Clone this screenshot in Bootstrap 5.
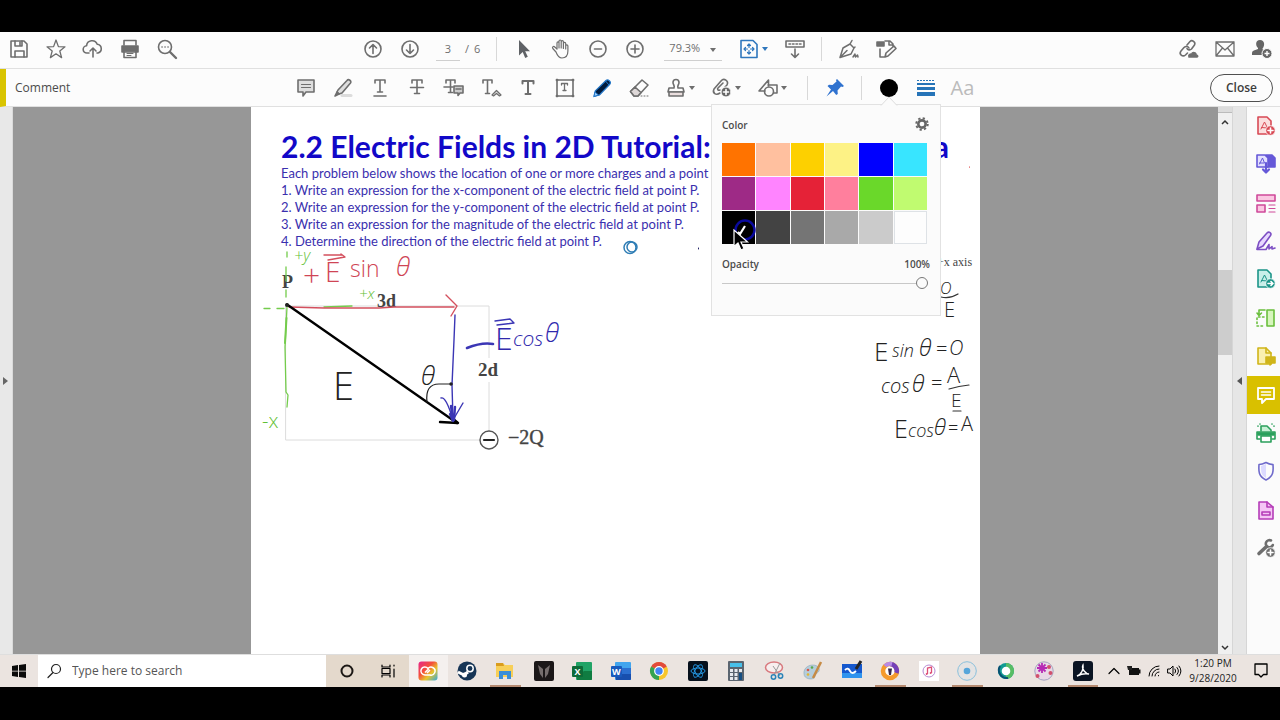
<!DOCTYPE html>
<html lang="en">
<head>
<meta charset="utf-8">
<meta name="viewport" content="width=device-width, initial-scale=1">
<title>Electric Fields Tutorial</title>
<link href="https://cdn.jsdelivr.net/npm/bootstrap@5.3.0/dist/css/bootstrap.min.css" rel="stylesheet">
<style>
  body { font-family: "Open Sans", "Noto Sans", sans-serif; font-size: 12px; line-height: 16px; color: #4b4b4b; background: #000; padding: 32px 0 33px; }
  svg { display: block; overflow: visible; }
  .ink { fill: none; stroke: currentColor; stroke-width: 1.6; stroke-linejoin: round; stroke-linecap: round; }
  .tool { width: 37px; height: 32px; padding: 0; border: 0; border-radius: 0; color: #6e6e6e; display: flex; align-items: center; justify-content: center; flex: none; }
  .tool svg { width: 20px; height: 20px; }
  .tool.wide { width: 46px; gap: 3px; }
  .caret { width: 0; border: 3px solid transparent; border-top: 4px solid currentColor; border-bottom: 0; }
  .blue { color: #2f77bd; }
  .bar { background: #fcfcfc; border-bottom: 1px solid #e0e0e0; }
  .bar-main { height: 37px; padding-bottom: 3px; }
  .bar-comment { height: 38px; border-left: 6px solid #d9c400; padding-right: 7px; }
  .lead-main { width: 354px; }
  .lead-comment { width: 281px; padding-left: 9px; font-size: 12px; font-weight: 500; }
  .rule { width: 1px; height: 24px; background: #d8d8d8; flex: none; margin: 0 8px; }
  .rule.near { margin-left: 0; }
  .rule.far { margin: 0 8px 0 12px; }
  .field { border: 0; border-bottom: 1px solid #cfcfcf; background: transparent; color: #6e6e6e; font-size: 11px; height: 24px; padding: 0; text-align: center; }
  .page-no { width: 24px; margin: 0 5px 0 8px; }
  .page-count { display: flex; align-items: center; gap: 5px; border: 0; padding-right: 16px; }
  .zoom-level { width: 58px; appearance: none; text-align: left; padding-left: 5px; }
  .zoom-box { margin: 0 8px 0 11px; position: relative; color: #6e6e6e; }
  .zoom-box .caret { position: absolute; right: 6px; top: 11px; }
  .close-btn { width: 63px; height: 28px; border: 1px solid #505050; border-radius: 14px; font-size: 12px; font-weight: 600; padding: 0; color: #3c3c3c; }
  .strip-l { width: 13px; background: #e8e8e8; border-right: 1px solid #dadada; }
  .desk { background: #979797; }
  .sheet { width: 729px; background: #fff; padding: 20px 31px 0 30px; color: #3a2fae; font-family: Lato, sans-serif; }
  .sheet h1 { font-size: 30px; line-height: 38px; font-weight: 700; color: #1208c8; margin: 0; white-space: nowrap; }
  .sheet p, .sheet li { font-size: 13px; line-height: 17px; margin: 0; white-space: nowrap; }
  .overlay { position: absolute; top: 0; left: 0; }
  .vscroll { width: 14px; background: #f0f0f0; }
  .vscroll .split { height: 6px; background: #dcdcdc; border-bottom: 1px solid #bbb; }
  .vscroll .thumb { height: 85px; background: #cdcdcd; }
  .strip-r { width: 15px; background: #e6e6e6; border-left: 1px solid #d6d6d6; border-right: 1px solid #d6d6d6; }
  .side { width: 33px; background: #fbfbfb; }
  .side-list { height: 460px; }
  .side .tool { width: 33px; height: 38px; padding-left: 5px; }
  .side .on { background: #d9c000; color: #fff; }
  .popup { position: absolute; left: -159px; top: 32px; width: 230px; height: 212px; background: #fbfbfb; border: 1px solid #e2e2e2; padding: 12px 10px 0; z-index: 5; color: #4b4b4b; font-size: 10px; font-weight: 600; }
  .notch { position: absolute; left: 169px; top: -9px; }
  .pal { display: grid; grid-template-columns: repeat(6, 1fr); gap: 1px; width: 205px; margin-top: 10px; }
  .pal button { height: 33px; border: 0; padding: 0; }
  .opacity { appearance: none; display: block; width: 206px; height: 12px; margin: 5px 0 0; background: linear-gradient(#c8c8c8, #c8c8c8) 0 6px / 194px 1px no-repeat; }
  .opacity::-webkit-slider-thumb { appearance: none; width: 12px; height: 12px; border: 1px solid #777; border-radius: 50%; background: #fbfbfb; }
  .opacity::-moz-range-thumb { width: 10px; height: 10px; border: 1px solid #777; border-radius: 50%; background: #fbfbfb; }
  .pointer { position: absolute; left: 19px; top: 111px; }
  .taskbar { height: 33px; background: #ebe4e0; border-top: 1px solid #dedede; color: #222; }
  .search { width: 288px; background: #fff; }
  .search input { border: 0; outline: 0; font-size: 12px; width: 230px; background: transparent; color: #444; }
  .search input::placeholder { color: #555; opacity: 1; }
  .cortana { width: 83px; background: #e4d9cc; }
  .apps { flex: 0 1 693px; }
  .apps button, .task { border: 0; background: none; padding: 0; display: flex; align-items: center; justify-content: center; height: 32px; }
  .apps button { flex: 1 1 0; min-width: 0; position: relative; }
  .apps svg { width: 20px; height: 20px; }
  .apps .live::after { content: ""; position: absolute; bottom: 0; left: 4px; right: 4px; height: 2px; background: #b58a70; }
  .apps .sel { background: #f4f0ee; }
  .task { flex: none; width: 20px; }
  .task.start { width: 38px; }
  .clock { width: 58px; font-size: 10px; line-height: 15px; text-align: center; }
</style>
</head>
<body class="vh-100 d-flex flex-column overflow-hidden m-0">

<header class="bar bar-main d-flex align-items-center flex-shrink-0">
  <div class="lead-main d-flex flex-shrink-0">
    <button class="tool btn" aria-label="Save"><svg class="ink" viewBox="0 0 20 20"><path d="M2 2h13l3 3v13H2z"/><path d="M6 2v5h7V2M11 3v3M6 18v-6h9v6"/></svg></button>
    <button class="tool btn" aria-label="Star"><svg class="ink" viewBox="0 0 20 20"><path d="M10 1l2.400 6.600 6.600.2-5.200 4.200 1.800 6.600L10 14.800l-5.600 3.800 1.800-6.600L1 7.800l6.600-.2z" stroke-width="1.300"/></svg></button>
    <button class="tool btn" aria-label="Upload"><svg class="ink" viewBox="0 0 20 20"><path d="M6 14H4a3.600 3.600 0 0 1-.4-7.200 5.500 5.500 0 0 1 10.600-1.600A4.500 4.500 0 0 1 15 14h-1M10 18V9M7 12l3-3 3 3"/></svg></button>
    <button class="tool btn" aria-label="Print"><svg class="ink" viewBox="0 0 20 20"><path d="M4 6V1.500h12V6M4 13v5.500h12V13z"/><path d="M2 7h16v6h-2v-1H4v1H2z" fill="currentColor"/><path d="M7 14.500h6M7 16.500h4" stroke-width="1"/></svg></button>
    <button class="tool btn" aria-label="Find"><svg class="ink" viewBox="0 0 20 20"><circle cx="8" cy="8" r="6.500"/><path d="M13 13l6 6" stroke-width="2.400"/><path d="M5 8h.1M8 8h.1M11 8h.1"/></svg></button>
  </div>
  <button class="tool btn" aria-label="Previous page"><svg class="ink" viewBox="0 0 20 20"><circle cx="10" cy="10" r="8"/><path d="M10 14.500v-9M6.500 9L10 5.500 13.500 9"/></svg></button>
  <button class="tool btn" aria-label="Next page"><svg class="ink" viewBox="0 0 20 20"><circle cx="10" cy="10" r="8"/><path d="M10 5.500v9M6.500 11l3.500 3.500 3.500-3.500"/></svg></button>
  <input class="field page-no" type="text" value="3" aria-label="Page number">
  <span class="field page-count"><span>/</span><span>6</span></span>
  <span class="rule near"></span>
  <button class="tool btn" aria-label="Select"><svg viewBox="0 0 20 20"><path d="M5 1v15.500l3.700-3.500 2.500 6 2.600-1.200-2.600-5.600H16z" fill="#5f6266"/></svg></button>
  <button class="tool btn" aria-label="Hand"><svg class="ink" viewBox="0 0 20 20"><path d="M5 13L1.800 9.500c-1-1.500.8-2.800 2-1.500L6 10.200V4c0-1.500 2-1.500 2 0V9 2.200c0-1.600 2.200-1.600 2.200 0V9 2.800c0-1.500 2.200-1.500 2.200 0V9.500 4.500c0-1.500 2.300-1.500 2.300 0V10 7c0-1.500 2.200-1.500 2.200 0v5c0 4-2 7-6 7-3.500 0-4.600-2.500-5.900-6z" stroke-width="1.200"/></svg></button>
  <button class="tool btn" aria-label="Zoom out"><svg class="ink" viewBox="0 0 20 20"><circle cx="10" cy="10" r="8"/><path d="M6.500 10h7"/></svg></button>
  <button class="tool btn" aria-label="Zoom in"><svg class="ink" viewBox="0 0 20 20"><circle cx="10" cy="10" r="8"/><path d="M6 10h8M10 6v8"/></svg></button>
  <div class="zoom-box"><select class="field zoom-level" aria-label="Zoom level"><option>79.3%</option></select><span class="caret"></span></div>
  <button class="tool wide btn blue" aria-label="Fit page"><svg class="ink" viewBox="0 0 20 20"><path d="M2 1.500h12l4 4v13H2z"/><path d="M10 5v3.500M10 11.500V15M5 10h3.500M11.500 10H15M8.500 6.500L10 5l1.500 1.500M8.500 13.500L10 15l1.500-1.500M6.500 8.500L5 10l1.500 1.500M13.500 8.500L15 10l-1.500 1.500" stroke-width="1.200"/></svg><span class="caret"></span></button>
  <button class="tool btn" aria-label="Scroll mode"><svg class="ink" viewBox="0 0 20 20"><path d="M1 2h18v6H1zM10 10v8M6.500 15l3.500 3.500 3.500-3.500"/><path d="M4 5h13" stroke-dasharray="1.500 2"/></svg></button>
  <span class="rule"></span>
  <button class="tool btn" aria-label="Sign"><svg class="ink" viewBox="0 0 20 20"><path d="M1 18.500L4 9l7-4 4 4-3 6-11 3.500L8 11.500M11 5l2-3.500M15 9l1-1M14 18l2-3 .5 3 2-2 .5 2" stroke-width="1.500"/></svg></button>
  <button class="tool btn" aria-label="Edit"><svg class="ink" viewBox="0 0 20 20"><path d="M4 10v8h5M9 2h5l3 3v3M13 2v4h4M9 18l1-4 8-7 2 2.500-8 7.500z"/><path d="M1 3h7v4H1z" fill="currentColor"/></svg></button>
  <div class="ms-auto d-flex">
    <button class="tool btn" aria-label="Share link"><svg class="ink" viewBox="0 0 20 20"><path d="M9 6l3-3.500c2-2 6 .5 4.500 3.500l-3 4c-1.500 1.500-4 1-4.500-.5M11 9c-1-2-3.500-2-5-.5l-3 3.500c-2.500 3 1.500 6.500 4.500 4l2-2"/><path d="M11 18c-1-3 2-3 2.500-2.500 1-3 5-2 4.500.500 2 0 2 2 1 2z" fill="currentColor"/></svg></button>
    <button class="tool btn" aria-label="Mail"><svg class="ink" viewBox="0 0 20 20"><path d="M1 3h18v14H1zM1 3l9 8 9-8M1 17l6.500-8M19 17l-6.500-8" stroke-width="1.300"/></svg></button>
    <button class="tool btn" aria-label="Add people"><svg viewBox="0 0 20 20"><path d="M8 1c5 0 5 6 2.500 8.500 0 2 3 2 4 3L11 16H0c0-4 0-4 6-6V9C3.500 7 3 1 8 1z" fill="#666"/><circle cx="15" cy="14.500" r="5" fill="#666" stroke="#fcfcfc"/><path d="M12.500 14.500h5M15 12v5" stroke="#fff" stroke-width="1.400"/></svg></button>
  </div>
</header>

<div class="bar bar-comment d-flex align-items-center flex-shrink-0">
  <div class="lead-comment flex-shrink-0">Comment</div>
  <button class="tool btn" aria-label="Note"><svg class="ink" viewBox="0 0 20 20"><path d="M2 2h16v12h-8l-3 4v-4H2z" fill="#dedede"/><path d="M5.500 6.500h9M5.500 9.500h9" stroke-width="1.200"/></svg></button>
  <button class="tool btn" aria-label="Highlight"><svg class="ink" viewBox="0 0 20 20"><path d="M9 17.500h9" stroke="#dcdcdc" stroke-width="3"/><path d="M5 12L14 2.500c1.500-2 5 .5 3.500 2.500L9 15l-3 1-2-2z" fill="#dedede"/><path d="M4 14l-2 4 4-2z" fill="currentColor"/></svg></button>
  <button class="tool btn" aria-label="Underline text"><svg class="ink" viewBox="0 0 20 20"><path d="M5 5V2h10v3M10 2v12M7.500 14h5M4 18h12"/></svg></button>
  <button class="tool btn" aria-label="Strike text"><svg class="ink" viewBox="0 0 20 20"><path d="M5 5V2h10v3M10 2v13M7.500 15.500h5M3.500 9.500h13"/></svg></button>
  <button class="tool btn" aria-label="Replace text"><svg class="ink" viewBox="0 0 20 20"><path d="M2 5V2h9v3M6.500 2v12M4.500 14.500h4M0 9h9"/><path d="M10 8h9v7h-3l-2 2.500V15h-4z" fill="#ccc"/><path d="M12 11h5"/></svg></button>
  <button class="tool btn" aria-label="Insert text"><svg class="ink" viewBox="0 0 20 20"><path d="M2 5V2h9v3M6.500 2v13M4.500 15.500h4"/><path d="M11 17l4.500-4.500L20 17l-1.500 1-3-2.500-3 2.500z" fill="#ddd" stroke-width="1.200"/></svg></button>
  <button class="tool btn" aria-label="Text comment"><svg class="ink" viewBox="0 0 20 20"><path d="M4.500 5.500V3h11v2.500M10 3v13M7.500 16h5" stroke-width="2"/></svg></button>
  <button class="tool btn" aria-label="Text box"><svg class="ink" viewBox="0 0 20 20"><path d="M2 2h16v16H2z"/><path d="M6.500 7V5.500h6V7M9.500 5.500v7M8 12.500h3" stroke-width="1.300"/><path d="M1.500 1.500h1v1h-1zM17.500 1.500h1v1h-1zM1.500 17.500h1v1h-1zM17.500 17.500h1v1h-1z"/></svg></button>
  <button class="tool btn" aria-label="Draw"><svg viewBox="0 0 20 20"><path d="M2 18.500L3.200 13 14 2.500c2-2 5.500 1.500 4 3.500L7.500 17z" fill="#001a3c" stroke="#2377c8" stroke-width="1.200"/><path d="M2 18.500L3 14l3.500 3z" fill="#9ccfff" stroke="#2377c8"/><path d="M13.500 3L17 7" stroke="#2377c8"/></svg></button>
  <button class="tool btn" aria-label="Eraser"><svg class="ink" viewBox="0 0 20 20"><path d="M1.500 13.500L13 2l6 5L9 18H5z"/><path d="M6 9l6 5.500-3 3.500H5l-3.500-4.500z" fill="#ded8d8"/><path d="M12 18h7" stroke-dasharray="1 2" stroke-width="1"/></svg></button>
  <button class="tool wide btn" aria-label="Stamp"><svg class="ink" viewBox="0 0 20 20"><path d="M8 10c1-3-1-3-1-5.500 0-4 6-4 6 0C13 7 11 7 12 10h5l1 4H2l1-4z"/><path d="M3 14h14v4H3z" fill="#eadede"/></svg><span class="caret"></span></button>
  <button class="tool wide btn" aria-label="Attach"><svg class="ink" viewBox="0 0 20 20"><path d="M8 15c-4 3-8 0-6-4L9 3c3-3.500 8 0 6 4M8 12c-2 1-3-1-2-2l5-5M13 9l2-2"/><circle cx="14" cy="14" r="5" fill="#666" stroke="#fcfcfc" stroke-width="1"/><path d="M11.500 14h5M14 11.500v5" stroke="#fff"/></svg><span class="caret"></span></button>
  <button class="tool wide btn" aria-label="Shapes"><svg class="ink" viewBox="0 0 20 20"><path d="M7 13H1l9.500-11v6M10 7h9v8h-3"/><circle cx="11" cy="13.500" r="4.500"/></svg><span class="caret"></span></button>
  <span class="rule far"></span>
  <button class="tool btn" aria-label="Keep tool selected"><svg viewBox="0 0 20 20"><path d="M12 1l7 7-1.500 1-1.500-.5-3.500 4 .3 3.500-1.600 1L8 13l-6.500 5.500L6 11.500 2.500 8l1.500-1.300 3.500.3 4-3.500L11 2z" fill="#2f72cf"/></svg></button>
  <span class="rule"></span>
  <div class="position-relative">
    <button class="tool btn" aria-label="Ink colour" aria-expanded="true"><svg viewBox="0 0 20 20"><circle cx="10" cy="10" r="9" fill="#000"/></svg></button>
    <section class="popup" aria-label="Color picker">
      <svg class="notch" width="16" height="10" viewBox="0 0 16 10"><path d="M0 9.500L8 1l8 8.500" fill="#fbfbfb" stroke="#ddd"/></svg>
      <div class="d-flex justify-content-between align-items-start">
        <span>Color</span>
        <button class="btn p-0 border-0" aria-label="Settings"><svg width="16" height="14" viewBox="0 0 16 16"><circle cx="8" cy="8" r="4.200" fill="none" stroke="#666" stroke-width="3"/><circle cx="8" cy="8" r="6.600" fill="none" stroke="#666" stroke-width="2.200" stroke-dasharray="2.590 2.590"/></svg></button>
      </div>
      <div class="pal">
        <button style="background:#ff7300" aria-label="Orange"></button><button style="background:#ffc09f" aria-label="Peach"></button><button style="background:#fdd000" aria-label="Gold"></button><button style="background:#fdf285" aria-label="Light yellow"></button><button style="background:#0000ff" aria-label="Blue"></button><button style="background:#38e5ff" aria-label="Cyan"></button>
        <button style="background:#9e2a86" aria-label="Purple"></button><button style="background:#ff84ff" aria-label="Pink"></button><button style="background:#e52237" aria-label="Red"></button><button style="background:#ff7f9d" aria-label="Rose"></button><button style="background:#6ad82a" aria-label="Green"></button><button style="background:#c0fb70" aria-label="Lime"></button>
        <button style="background:#000000" aria-label="Black"></button><button style="background:#434343" aria-label="Dark gray"></button><button style="background:#757575" aria-label="Gray"></button><button style="background:#a9a9a9" aria-label="Mid gray"></button><button style="background:#cbcbcb" aria-label="Light gray"></button><button class="border" style="background:#fdfdfd" aria-label="White"></button>
      </div>
      <div class="d-flex justify-content-between mt-2 pt-1"><label for="op">Opacity</label><output for="op">100%</output></div>
      <input class="opacity" id="op" type="range" min="0" max="100" value="100">
      <svg class="pointer" width="30" height="38" viewBox="729 215 30 38"><circle cx="743" cy="229" r="9.500" fill="none" stroke="#0a0a9c" stroke-width="2.500"/><path d="M736 231l2 2 5-8" fill="none" stroke="#fff" stroke-width="2.200"/><path d="M732 229v16.500l4-3.500 3 7 3-1.500-3-6.500h6.500z" fill="#000" stroke="#fff" stroke-width="1.200"/></svg>
    </section>
  </div>
  <button class="tool btn blue" aria-label="Line thickness"><svg viewBox="0 0 20 20" stroke="#2674b8"><path d="M1 2.500h18" stroke-dasharray="2 1"/><path d="M1 6h18" stroke-width="2"/><path d="M1 10.500h18" stroke-width="3"/><path d="M1 16h18" stroke-width="4"/></svg></button>
  <button class="tool btn fs-5" disabled><span style="color:#999">Aa</span></button>
  <button class="btn close-btn ms-auto">Close</button>
</div>

<main class="d-flex flex-grow-1 overflow-hidden">
  <div class="strip-l d-flex align-items-center"><svg width="12" height="8" viewBox="0 0 12 8"><path d="M3 0l5 4-5 4z" fill="#666"/></svg></div>
  <div class="desk flex-grow-1 d-flex justify-content-center overflow-hidden">
    <article class="sheet position-relative">
      <h1 class="d-flex justify-content-between"><span>2.2 Electric Fields in 2D Tutorial:</span><span>a</span></h1>
      <p>Each problem below shows the location of one or more charges and a point</p>
      <ol class="list-unstyled m-0">
        <li>1. Write an expression for the x-component of the electric field at point P.</li>
        <li>2. Write an expression for the y-component of the electric field at point P.</li>
        <li>3. Write an expression for the magnitude of the electric field at point P.</li>
        <li>4. Determine the direction of the electric field at point P.</li>
      </ol>
      <svg class="overlay" width="729" height="547" viewBox="251 107 729 547" fill="none" stroke-linecap="round" stroke-linejoin="round" role="img" aria-label="Electric field diagram">
        <path d="M286 306H489V440H286z" stroke="#dcdcdc"/>
        <g fill="#444" font-family="Liberation Serif, serif" font-weight="700" font-size="18">
          <text x="282" y="288">P</text><text x="377" y="307">3d</text>
          <rect x="478" y="358" width="22" height="24" fill="#fff"/><text x="478" y="376" font-size="19">2d</text>
          <text x="508" y="444" font-size="20" font-weight="400" stroke="#444" stroke-width=".4">−2Q</text>
          <text x="937" y="266" font-size="12" font-weight="400">+x axis</text>
        </g>
        <circle cx="489" cy="440" r="9" fill="#fff" stroke="#555" stroke-width="1.400"/><path d="M484 440h10" stroke="#222" stroke-width="2.200"/>
        <g stroke="#74cc4c" stroke-width="1.300">
          <path d="M287 252v5M286 267v14M286 290v7M264 308.500h6M277 308.500h7M287 307l-2 40 1 45 2 3-1 12M324 307l28-1"/><path d="M286.500 318l-1.500 25" stroke-width="2"/>
        </g>
        <g stroke="#d4505e" stroke-width="1.400"><path d="M289 307l35 1 55 0 15-1 60 0M446 295l11 11-6 10M324 255l18 0M328 260l17-3-4-3"/></g>
        <path d="M287 304.500L457 423" stroke="#000" stroke-width="2.400"/><path d="M452 418l6 5-18-1" stroke="#000" stroke-width="2.400"/><circle cx="287" cy="305" r="2" fill="#222"/>
        <g stroke="#3b36b5" stroke-width="1.400"><path d="M455 315l-1 25-2 45 1 35M441 398q5-2 12 22l10-17M495 321l15-2M497 325l17-2-4-4"/><path d="M451 406l2 15-3-7 4 6 1-13" stroke-width="2.400"/><path d="M467 348q15-6 26-4" stroke-width="2.600"/></g>
        <path d="M427 402q-2-18 12-18l13 0" stroke="#222" stroke-width="1.200"/><circle cx="451" cy="384" r="1.700" fill="#222"/>
        <path d="M941 297q9 2 17-3M949 389q10-3 20-4M953 411h8" stroke="#333" stroke-width="1.200"/>
        <g font-family="Open Sans, sans-serif" font-weight="300">
          <g fill="#5fc035"><text x="294" y="261" font-size="16" font-style="italic">+y</text><text x="359" y="299" font-size="15" font-style="italic">+x</text><text x="262" y="428" font-size="20">-x</text></g>
          <g fill="#cf4555"><text x="303" y="286" font-size="30">+</text><text x="325" y="282" font-size="28">E</text><text x="350" y="277" font-size="23">sin</text><text x="396" y="276" font-size="26" font-style="italic">θ</text></g>
          <g fill="#3029ad"><text x="495" y="350" font-size="32">E</text><text x="513" y="346" font-size="21" font-style="italic">cos</text><text x="545" y="342" font-size="26" font-style="italic">θ</text></g>
          <g fill="#222"><text x="333" y="400" font-size="38">E</text><text x="421" y="385" font-size="26" font-style="italic">θ</text>
            <text x="940" y="294" font-size="16" font-style="italic">O</text><text x="944" y="317" font-size="20">E</text>
            <text x="874" y="361" font-size="26">E</text><text x="892" y="357" font-size="18" font-style="italic">sin</text><text x="919" y="356" font-size="23" font-style="italic">θ</text><text x="936" y="356" font-size="20">=</text><text x="949" y="355" font-size="20" font-style="italic">O</text>
            <text x="881" y="393" font-size="20" font-style="italic">cos</text><text x="912" y="392" font-size="23" font-style="italic">θ</text><text x="931" y="390" font-size="20">=</text><text x="947" y="383" font-size="22">A</text><text x="951" y="407" font-size="19">E</text>
            <text x="894" y="438" font-size="25">E</text><text x="908" y="437" font-size="18" font-style="italic">cos</text><text x="934" y="435" font-size="22" font-style="italic">θ</text><text x="948" y="434" font-size="18">=</text><text x="961" y="431" font-size="20">A</text></g>
        </g>
        <circle cx="630" cy="247.500" r="6" stroke="#2f7db5" stroke-width="1.500"/><circle cx="632" cy="247" r="5" stroke="#2f7db5" stroke-width="1.500"/><path d="M698.500 248v1" stroke="#226"/><path d="M969.500 167v.2" stroke="#d33"/>
      </svg>
    </article>
  </div>
  <div class="vscroll d-flex flex-column flex-shrink-0">
    <div class="split"></div>
    <svg width="14" height="18" viewBox="0 0 14 18"><path d="M4 11l3-3 3 3" fill="none" stroke="#333" stroke-width="1.500"/></svg>
    <div style="flex: 139 1 0"></div><div class="thumb"></div><div style="flex: 286 1 0"></div>
    <svg width="14" height="14" viewBox="0 0 14 14"><path d="M4 6l3 3 3-3" fill="none" stroke="#333" stroke-width="1.500"/></svg>
  </div>
  <div class="strip-r d-flex align-items-center flex-shrink-0"><svg width="13" height="8" viewBox="0 0 13 8"><path d="M9 0L4 4l5 4z" fill="#555"/></svg></div>
  <nav class="side flex-shrink-0" aria-label="Tools">
    <div class="side-list d-flex flex-column justify-content-between">
      <button class="tool btn" aria-label="Create PDF"><svg class="ink" style="color:#d84a55" viewBox="0 0 20 20"><path d="M2 1h9l4 4v13H2z" fill="#fbdede"/><path d="M5 13l3.500-7 3 6-6-.5" stroke-width="1"/><circle cx="14.500" cy="14.500" r="4.800" fill="currentColor" stroke="#fff" stroke-width=".8"/><path d="M12 14.500h5M14.500 12v5" stroke="#fff"/></svg></button>
      <button class="tool btn" aria-label="Combine files"><svg class="ink" style="color:#6558d8" viewBox="0 0 20 20"><path d="M10 1h6l3 3v9h-9z" fill="currentColor"/><path d="M1 1h8l3 3v9H1z" fill="#e3e0ff"/><path d="M3.500 10l3-6 2 5-5 0" stroke-width="1"/><path d="M10 9v9M7 15.500l3 3 3-3" stroke-width="2.200"/></svg></button>
      <button class="tool btn" aria-label="Organize pages"><svg class="ink" style="color:#cf4a9a" viewBox="0 0 20 20"><path d="M1 2h18v6H1zM1 12h8v7H1z" fill="#fbc7e2"/><path d="M13 12h6M13 15.500h6M13 19h6" stroke-width="1.200"/></svg></button>
      <button class="tool btn" aria-label="Fill and sign"><svg class="ink" style="color:#7d4fc4" viewBox="0 0 20 20"><path d="M1 18L3 11 11 2c2-2 5 0 3.500 2.500L7 15z" fill="#e8d8ff"/><path d="M1 18.500h9l3-5 0 4.500 3-2.500V18l3-1"/></svg></button>
      <button class="tool btn" aria-label="Export PDF"><svg class="ink" style="color:#1b9488" viewBox="0 0 20 20"><path d="M2 1h9l4 4v13H2z" fill="#c8efe9"/><path d="M5 13l3.500-7 3 6-6-.5" stroke-width="1"/><circle cx="14.500" cy="14.500" r="4.800" fill="currentColor" stroke="#fff" stroke-width=".8"/><path d="M12 14.500h5M15 12.500l2 2-2 2" stroke="#fff"/></svg></button>
      <button class="tool btn" aria-label="Crop pages"><svg class="ink" style="color:#6abf3c" viewBox="0 0 20 20"><path d="M11 2h7v16h-7z" fill="#d7f5bd"/><path d="M8 9H1v9h7" stroke-dasharray="1.500 2.500"/><path d="M9 2H3v5M1 5l2 2.500L5.500 5"/></svg></button>
      <button class="tool btn" aria-label="Send for comments"><svg class="ink" style="color:#d0b51a" viewBox="0 0 20 20"><path d="M2 2h8l5 5v11H2z" fill="#faf0b0"/><path d="M10 2v5h5"/><path d="M10 11h9v6h-3l-2 2v-2h-4z" fill="currentColor"/></svg></button>
      <button class="tool btn on" aria-label="Comment"><svg class="ink" viewBox="0 0 20 20" style="color:#fff"><path d="M2 3h16v11h-8l-4 4v-4H2z" stroke-width="1.800"/><path d="M5.500 7h9M5.500 10h9"/></svg></button>
      <button class="tool btn" aria-label="Print production"><svg class="ink" style="color:#2ba05c" viewBox="0 0 20 20"><path d="M5 8V3h6l4 4v1" fill="#c8f0d6"/><path d="M4 16H1V9h18v7h-3"/><path d="M5 13h10v6H5z" fill="#fff"/><path d="M2 10h16v2H2z" fill="currentColor"/><path d="M2 3v.2M18 3v.2M4 1v.1M16 1v.1"/></svg></button>
      <button class="tool btn" aria-label="Protect"><svg class="ink" style="color:#6f6acb" viewBox="0 0 20 20"><path d="M10 1.500c3 1.500 5 2 7 2 .5 7 .5 12-7 15.500-7.500-3.500-7.500-8.500-7-15.500 2 0 4-.5 7-2z"/><path d="M10 3v14c-5-3-5-6-5-12z" fill="#dcdaff" stroke="none"/></svg></button>
      <button class="tool btn" aria-label="Forms"><svg class="ink" style="color:#b53cb8" viewBox="0 0 20 20"><path d="M3 2h8l6 5v12H3z" fill="#f5c6f5"/><path d="M11 2v5h6M6 12h8v3H6z"/></svg></button>
      <button class="tool btn" aria-label="More tools"><svg class="ink" viewBox="0 0 20 20"><path d="M3 15.500L10 9" stroke-width="3.600"/><path d="M15 2.500a3.600 3.600 0 1 0 1.800 4.500" stroke-width="2.600"/><circle cx="14.500" cy="14.500" r="4.800" fill="currentColor" stroke="#fff" stroke-width=".8"/><path d="M12 14.500h5M14.500 12v5" stroke="#fff"/></svg></button>
    </div>
  </nav>
</main>

<footer class="taskbar d-flex flex-shrink-0">
  <button class="task start" aria-label="Start"><svg width="14" height="14" viewBox="0 0 14 14"><path d="M0 2l6-1v5.700H0zM7 1l7-1v6.700H7zM0 7.500h6V13l-6-1zM7 7.500h7V14l-7-1z" fill="#0a0a0a"/></svg></button>
  <div class="search d-flex align-items-center ps-2 gap-2 flex-shrink-0">
    <svg class="ink" width="16" height="16" viewBox="0 0 16 16"><circle cx="10" cy="6" r="4.500" stroke-width="1.200"/><path d="M7 9.500l-5 5" stroke-width="1.200"/></svg>
    <input type="text" placeholder="Type here to search" aria-label="Search">
  </div>
  <div class="cortana d-flex flex-shrink-0 justify-content-around">
    <button class="task" aria-label="Cortana"><svg width="14" height="14" viewBox="0 0 14 14"><circle cx="7" cy="7" r="5.500" fill="none" stroke="#1c1815" stroke-width="2"/></svg></button>
    <button class="task" aria-label="Task view"><svg class="ink" width="15" height="14" viewBox="0 0 15 14"><path d="M1 1v2h8V1M1 13v-2h8v2M1 4.500h8v5H1zM13 1v1M13 5v8" stroke-width="1.200"/></svg></button>
  </div>
  <div class="apps d-flex">
    <button class="sel" aria-label="Creative Cloud"><svg viewBox="0 0 20 20"><defs><linearGradient id="cc" x2="1" y2="1"><stop stop-color="#e6268c"/><stop offset=".4" stop-color="#f4503a"/><stop offset=".65" stop-color="#e8c62c"/><stop offset="1" stop-color="#2fa8e0"/></linearGradient></defs><rect x=".5" y=".5" width="19" height="19" rx="3" fill="url(#cc)"/><path d="M7 14a4 4 0 1 1 3-6.500A4 4 0 1 1 12 14zM7 11.500l4-4M9 12l3-3" fill="none" stroke="#fff" stroke-width="1.500"/></svg></button>
    <button aria-label="Steam"><svg viewBox="0 0 20 20"><circle cx="10" cy="10" r="9.500" fill="#163556"/><circle cx="13" cy="7.500" r="3.200" fill="none" stroke="#fff" stroke-width="1.500"/><path d="M1 11l6 3 4-3" fill="none" stroke="#fff" stroke-width="3"/><circle cx="7.500" cy="14" r="2.500" fill="#fff"/></svg></button>
    <button class="live" aria-label="File Explorer"><svg viewBox="0 0 20 20"><path d="M1 2h7l2 2h8v12H1z" fill="#f7cf58"/><path d="M1 2h7l1 3H1z" fill="#d99c1e"/><path d="M4 18v-8h12v8h-4v-4H8v4z" fill="#3a8ed8"/></svg></button>
    <button aria-label="Predator"><svg viewBox="0 0 20 20"><rect width="20" height="20" rx="2" fill="#1b1718"/><path d="M4 4l5 4v9l-3-4zM16 4l-5 4v9l3-4z" fill="#756d6d"/></svg></button>
    <button aria-label="Excel"><svg viewBox="0 0 20 20"><rect x="4" y="1" width="16" height="18" rx="1" fill="#21a366"/><path d="M12 10h8v8a1 1 0 0 1-1 1H5v-4z" fill="#107c41"/><rect y="5" width="11" height="11" rx="1" fill="#0e6a38"/><text x="2.500" y="14" font-size="9" font-weight="700" fill="#fff">X</text></svg></button>
    <button aria-label="Word"><svg viewBox="0 0 20 20"><rect x="4" y="1" width="16" height="18" rx="1" fill="#41a5ee"/><path d="M4 7h16v11a1 1 0 0 1-1 1H5z" fill="#2b6fd0"/><path d="M4 13h16v5l-1 1H5z" fill="#184fae"/><rect y="5" width="11" height="11" rx="1" fill="#185abd"/><text x="1" y="14" font-size="9" font-weight="700" fill="#fff">W</text></svg></button>
    <button aria-label="Chrome"><svg viewBox="0 0 20 20"><circle cx="10" cy="10" r="9" fill="#f8c62c"/><path d="M10 10L2.200 5.500a9 9 0 0 1 15.600 0z" fill="#e24a3b"/><path d="M10 10l0 9A9 9 0 0 1 2.200 5.500z" fill="#34a353"/><circle cx="10" cy="10" r="4.300" fill="#4285f4" stroke="#fff" stroke-width="1.200"/></svg></button>
    <button aria-label="Battle.net"><svg viewBox="0 0 20 20"><rect width="20" height="20" rx="2" fill="#06101c"/><g fill="none" stroke="#2495e0" stroke-width="1"><ellipse cx="10" cy="10" rx="7" ry="3"/><ellipse cx="10" cy="10" rx="7" ry="3" transform="rotate(60 10 10)"/><ellipse cx="10" cy="10" rx="7" ry="3" transform="rotate(120 10 10)"/></g></svg></button>
    <button aria-label="Calculator"><svg viewBox="0 0 20 20"><rect x="2" width="16" height="20" rx="1" fill="#5b6570"/><path d="M4 2h12v4H4z" fill="#47c0ea"/><path d="M4 8h3v3H4zM8.500 8h3v3h-3zM13 8h3v3h-3zM4 12h3v3H4zM8.500 12h3v3h-3zM4 16h3v3H4zM8.500 16h3v3h-3z" fill="#e7eaee"/><path d="M13 12h3v7h-3z" fill="#174f83"/></svg></button>
    <button aria-label="Snipping Tool"><svg viewBox="0 0 20 20" fill="none"><ellipse cx="9" cy="6.500" rx="8.500" ry="5.500" stroke="#d8797e" stroke-width="1.500" fill="#f7eeee"/><path d="M15 2L9 14M8 5l7 10" stroke="#999"/><circle cx="8.500" cy="16" r="2.200" stroke="#2a83b8" stroke-width="1.500"/><circle cx="15.500" cy="15" r="2.200" stroke="#2a83b8" stroke-width="1.500"/></svg></button>
    <button aria-label="Paint"><svg viewBox="0 0 20 20"><path d="M1 13C0 6 8 2 14 5c4 3 2 6 0 7s-1 3-3 5-10 1-10-4z" fill="#b5cddb" stroke="#8ba7b8" stroke-width=".6"/><circle cx="5" cy="9" r="1.300" fill="#d8574b"/><circle cx="9" cy="6.500" r="1.300" fill="#59a94c"/><circle cx="5" cy="13.500" r="1.300" fill="#e3b52e"/><path d="M18 1L10 17" stroke="#c78b45" stroke-width="2.500"/></svg></button>
    <button aria-label="Whiteboard"><svg viewBox="0 0 20 20"><rect y="3" width="20" height="14" fill="#1558ce"/><path d="M0 12h20v5H0z" fill="#2f93ee"/><path d="M3 9q3-3 5 1t6 0" fill="none" stroke="#fff" stroke-width="1.800"/><path d="M19 0l-5 8" stroke="#252525" stroke-width="3"/></svg></button>
    <button class="live" aria-label="Secure Browser"><svg viewBox="0 0 20 20"><circle cx="10" cy="10" r="7" fill="#fff" stroke="#f49a2d" stroke-width="4.500"/><path d="M10 3a7 7 0 0 1 6.500 9" fill="none" stroke="#7440b9" stroke-width="4.500"/><path d="M5 5a7 7 0 0 1 7-2" fill="none" stroke="#b88ae5" stroke-width="4"/><path d="M8 7.500h4L11 14H9z" fill="#33284e"/></svg></button>
    <button aria-label="iTunes"><svg viewBox="0 0 20 20"><rect width="20" height="20" fill="#fff"/><circle cx="10" cy="10" r="6" fill="none" stroke="#b78bd3"/><path d="M8.500 13V7l4-1v6" fill="none" stroke="#dd4e76" stroke-width="1.300"/><circle cx="7.700" cy="13" r="1" fill="#dd4e76"/><circle cx="11.700" cy="12" r="1" fill="#dd4e76"/></svg></button>
    <button class="live" aria-label="Recorder"><svg viewBox="0 0 20 20"><circle cx="10" cy="10" r="9.300" fill="#e4e3e3" stroke="#8ac0dc"/><circle cx="10" cy="10" r="3.300" fill="#55a5da"/></svg></button>
    <button aria-label="Webex"><svg viewBox="0 0 20 20"><circle cx="10" cy="10" r="8" fill="#129b93"/><path d="M10 2a8 8 0 0 1 0 16z" fill="#58bd64"/><path d="M4 5a8 8 0 0 0 8 12" stroke="#075172" stroke-width="2" fill="none"/><circle cx="10" cy="10" r="4.300" fill="#fff"/></svg></button>
    <button aria-label="Molecules"><svg viewBox="0 0 20 20"><circle cx="10" cy="10" r="9.200" fill="#e8d8e6" stroke="#a3a3c0"/><path d="M8 2v10M3 7h10M4.500 3.500l7 7M11.500 3.500l-7 7" stroke="#b62ab5" stroke-width="1.800"/><circle cx="15" cy="6" r="2" fill="#d1506d"/><circle cx="16.500" cy="12" r="2" fill="#d1506d"/><circle cx="3.500" cy="15" r="2" fill="#d1506d"/></svg></button>
    <button class="live" aria-label="Acrobat"><svg viewBox="0 0 20 20"><rect width="20" height="20" rx="3" fill="#0a1423"/><path d="M4 15c4-1 7-7 6-11-2 4 3 9 6 9-5-1-8 0-12 2z" fill="none" stroke="#fff" stroke-width="1.400"/></svg></button>
  </div>
  <div class="d-flex ms-auto align-items-center">
    <button class="task" aria-label="Show hidden icons"><svg class="ink" width="12" height="12" viewBox="0 0 12 12"><path d="M1 8.500l5-5 5 5" stroke-width="1.200"/></svg></button>
    <button class="task" aria-label="Battery"><svg width="14" height="12" viewBox="0 0 14 12"><path d="M2 3h10v1.500h1.500v4H12V10H2z" fill="#111"/><path d="M0 1h5v4H1z" fill="#222"/></svg></button>
    <button class="task" aria-label="Wireless"><svg class="ink" width="12" height="12" viewBox="0 0 12 12"><path d="M1 11A10 10 0 0 1 11 1M4 11a7 7 0 0 1 7-7M7 11a4 4 0 0 1 4-4M10.500 10.500v.3" stroke-width="1"/></svg></button>
    <button class="task" aria-label="Volume"><svg class="ink" width="14" height="12" viewBox="0 0 14 12"><path d="M1 4h2l3-3v10L3 8H1zM8 4q1.500 2 0 4M10 2.500q3 3.500 0 7M12 1q4 5 0 10" stroke-width="1"/></svg></button>
    <div class="clock">1:20 PM<br>9/28/2020</div>
    <button class="task start" aria-label="Notifications"><svg class="ink" width="14" height="16" viewBox="0 0 14 16"><path d="M1 1h12v10.500H9.500L7 14l-2.500-2.500H1z" stroke-width="1.300"/></svg></button>
  </div>
</footer>
<script src="https://cdn.jsdelivr.net/npm/bootstrap@5.3.0/dist/js/bootstrap.bundle.min.js"></script>
</body>
</html>
